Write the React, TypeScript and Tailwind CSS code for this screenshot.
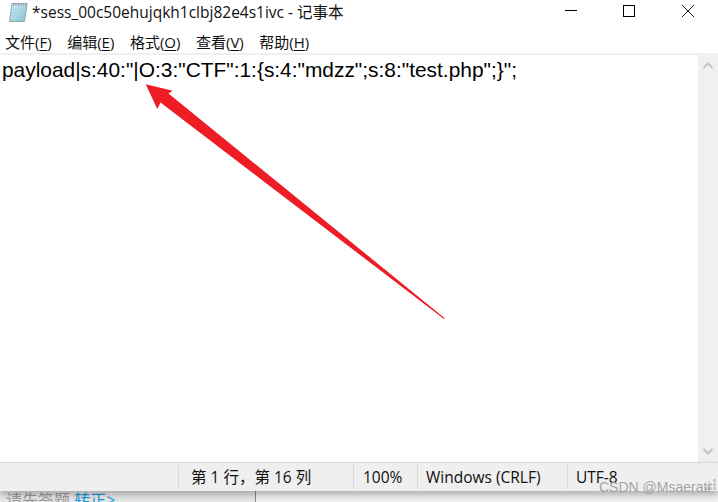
const sans = "font-['Open_Sans','Noto_Sans_CJK_SC',sans-serif]";

function NotepadIcon() {
  return (
    <svg width="20" height="21" viewBox="0 0 20 21" className="shrink-0 -mt-[2px]">
      <defs>
        <linearGradient id="pad" x1="0" y1="0" x2="1" y2="1">
          <stop offset="0" stopColor="#d8eef3" />
          <stop offset="1" stopColor="#7fc0d4" />
        </linearGradient>
      </defs>
      <path d="M4 1.5h15l-2.5 18h-15z" fill="url(#pad)" stroke="#8fa8b0" strokeWidth="1" />
      <path d="M5.5 1v3M8 1v3M10.5 1v3M13 1v3M15.5 1v3M18 1v3" stroke="#9a9fa3" strokeWidth="1" />
      <path d="M4.5 7.5h11M4.1 10.5h11M3.7 13.5h11M3.3 16.5h11" stroke="#a9d3e1" strokeWidth="1" />
    </svg>
  );
}

function WindowButtons() {
  return (
    <div className="flex items-center">
      <div className="w-[59px] h-[22px] flex items-center justify-center">
        <svg width="12" height="12" viewBox="0 0 12 12">
          <path d="M0 5.5h12" stroke="#000" strokeWidth="1" />
        </svg>
      </div>
      <div className="w-[58px] h-[22px] flex items-center justify-center">
        <svg width="12" height="12" viewBox="0 0 12 12">
          <rect x="0.5" y="0.5" width="11" height="11" fill="none" stroke="#000" strokeWidth="1" />
        </svg>
      </div>
      <div className="w-[60px] h-[22px] flex items-center justify-center">
        <svg width="12" height="12" viewBox="0 0 12 12">
          <path d="M0 0l12 12M12 0L0 12" stroke="#222" strokeWidth="1" />
        </svg>
      </div>
    </div>
  );
}

function Menu({ label, hot }: { label: string; hot: string }) {
  return (
    <span className="text-[15px] leading-[23px] text-[#111]">
      {label}(<span className="underline underline-offset-2">{hot}</span>)
    </span>
  );
}

function Chevron({ up }: { up?: boolean }) {
  return (
    <svg width="10" height="7" viewBox="0 0 10 7">
      <path d={up ? "M0.5 6L5 1.5 9.5 6" : "M0.5 1L5 5.5 9.5 1"} fill="none" stroke="#c4c4c4" strokeWidth="2" />
    </svg>
  );
}

function Grip() {
  const dots = [
    [8, 0],
    [4, 4],
    [8, 4],
    [0, 8],
    [4, 8],
    [8, 8],
  ];
  return (
    <svg width="11" height="11" viewBox="0 0 11 11" className="absolute right-[2px] bottom-[1px]">
      {dots.map(([x, y]) => (
        <rect key={`${x}-${y}`} x={x} y={y} width="3" height="3" fill="#c6c6c6" />
      ))}
    </svg>
  );
}

export default function App() {
  return (
    <div className={`relative w-[718px] h-[502px] overflow-hidden bg-white flex flex-col ${sans}`}>
      {/* Title bar */}
      <div className="h-[31px] shrink-0 flex items-start justify-between">
        <div className="h-[26px] flex items-center pl-[8px] gap-[4px]">
          <NotepadIcon />
          <span className="text-[15.5px] text-[#111] whitespace-nowrap">*sess_00c50ehujqkh1clbj82e4s1ivc - 记事本</span>
        </div>
        <WindowButtons />
      </div>

      {/* Menu */}
      <div className="h-[22px] shrink-0 flex items-center gap-[15.5px] pl-[5px]">
        <Menu label="文件" hot="F" />
        <Menu label="编辑" hot="E" />
        <Menu label="格式" hot="O" />
        <Menu label="查看" hot="V" />
        <Menu label="帮助" hot="H" />
      </div>
      <div className="h-[2px] shrink-0 bg-[#f0f0f0]" />

      {/* Editor */}
      <div className="flex-1 min-h-0 flex">
        <div className="flex-1 pl-[2px] pt-[2px] font-['Liberation_Sans',sans-serif] text-[20.9px] leading-[26px] text-black whitespace-pre">
          payload|s:40:"|O:3:"CTF":1:{"{"}s:4:"mdzz";s:8:"test.php";{"}"}";
        </div>
        <div className="w-[20px] bg-[#f0f0f0] flex flex-col items-center justify-between py-[7px]">
          <Chevron up />
          <Chevron />
        </div>
      </div>

      {/* Status bar */}
      <div className="h-[29px] shrink-0 relative bg-[#efefef] border-t border-[#d9d9d9] flex text-[15.5px] text-[#111] shadow-[0_4px_6px_rgba(0,0,0,0.25)] z-10">
        <div className="w-[179px] my-[2px] border-r border-[#d9d9d9]" />
        <div className="w-[175px] my-[2px] border-r border-[#d9d9d9] flex items-center pl-[12px] pt-[2px] whitespace-nowrap">第 1 行，第 16 列</div>
        <div className="w-[64px] my-[2px] border-r border-[#d9d9d9] flex items-center pl-[9px] pt-[2px]">100%</div>
        <div className="w-[150px] my-[2px] border-r border-[#d9d9d9] flex items-center pl-[8px] pt-[2px] whitespace-nowrap">Windows (CRLF)</div>
        <div className="flex-1 my-[2px] flex items-center pl-[8px] pt-[2px]">UTF-8</div>
        <Grip />
      </div>

      {/* Page behind the window */}
      <div className="h-[11px] shrink-0 flex overflow-hidden">
        <div className="w-[256px] bg-[#e6e6e6] border-r border-[#8a8a8a] pl-[6px]">
          <span className="block text-[16px] leading-[20px] -mt-[1px] text-[#999] whitespace-nowrap">
            请先签题 <span className="text-[#1a9ad6]">转正&gt;</span>
          </span>
        </div>
        <div className="flex-1 bg-[#efefef]" />
      </div>

      {/* Red annotation arrow */}
      <svg width="718" height="502" viewBox="0 0 718 502" className="absolute left-0 top-0 pointer-events-none z-20">
        <path
          d="M145.7 84.3L172.7 90.7 168.5 93.5 444.5 318 444 319 160.5 102.5 157.3 109z"
          fill="#ee1c25"
        />
      </svg>

      {/* Watermark */}
      <span className="absolute z-30 left-[599px] top-[478px] text-[14px] leading-[18px] text-[#9a9a9a]/90 whitespace-nowrap font-['Liberation_Sans',sans-serif]">
        CSDN @Msaerati
      </span>
    </div>
  );
}
